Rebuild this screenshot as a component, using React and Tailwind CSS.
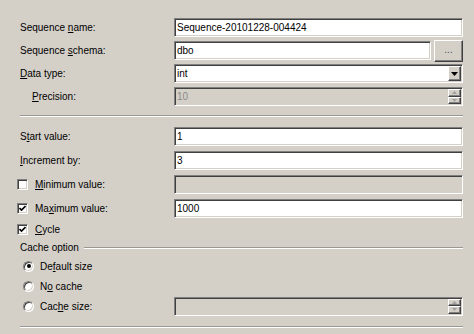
import React from "react";

const Acc = ({ text, i }) => (
  <span>
    {text.slice(0, i)}
    <span className="underline underline-offset-[1px]">{text[i]}</span>
    {text.slice(i + 1)}
  </span>
);

const Field = ({ children, disabled, className = "" }) => (
  <div
    className={`h-[19px] flex items-center border border-t-[#808080] border-l-[#808080] border-b-white border-r-white shadow-[inset_1px_1px_0_#404040,inset_-1px_-1px_0_#d4d0c8] ${
      disabled ? "bg-[#d4d0c8]" : "bg-white"
    } ${className}`}
  >
    {children}
  </div>
);

const Text = ({ children, gray }) => (
  <div className={`flex-1 pl-[2px] pt-[1px] leading-none ${gray ? "text-[#8a8a8a]" : "text-black"}`}>{children}</div>
);

const Spinner = () => (
  <div className="flex flex-col mr-[1px] w-[13px] h-[15px]">
    {[0, 1].map((k) => (
      <div
        key={k}
        className="flex-1 flex items-center justify-center bg-[#d4d0c8] border border-t-white border-l-white border-b-[#404040] border-r-[#404040] shadow-[inset_-1px_-1px_0_#808080]"
      >
        <svg width="5" height="3" viewBox="0 0 5 3">
          {k === 0 ? (
            <polygon points="0,3 5,3 2.5,0" fill="#a0a0a0" />
          ) : (
            <polygon points="0,0 5,0 2.5,3" fill="#a0a0a0" />
          )}
        </svg>
      </div>
    ))}
  </div>
);

const DropBtn = () => (
  <div className="mr-[1px] w-[13px] h-[15px] flex items-center justify-center bg-[#d4d0c8] border border-t-white border-l-white border-b-[#404040] border-r-[#404040] shadow-[inset_-1px_-1px_0_#808080]">
    <svg width="7" height="4" viewBox="0 0 7 4">
      <polygon points="0,0 7,0 3.5,4" fill="#000" />
    </svg>
  </div>
);

const Check = ({ checked }) => (
  <div className="w-[11px] h-[11px] bg-white border border-t-[#808080] border-l-[#808080] border-b-white border-r-white shadow-[inset_1px_1px_0_#404040,inset_-1px_-1px_0_#d4d0c8] flex items-center justify-center">
    {checked && (
      <svg width="7" height="7" viewBox="0 0 7 7">
        <path d="M0.5 3 L2.5 5 L6.5 1" stroke="#000" strokeWidth="1.6" fill="none" />
      </svg>
    )}
  </div>
);

const Radio = ({ on }) => (
  <div className="w-[11px] h-[11px] rounded-full bg-white border border-t-[#808080] border-l-[#808080] border-b-white border-r-white shadow-[inset_1px_1px_0_#404040,inset_-1px_-1px_0_#d4d0c8] flex items-center justify-center">
    {on && <div className="w-[4px] h-[4px] rounded-full bg-black" />}
  </div>
);

const Etched = ({ className = "" }) => (
  <div className={`h-0 border-t border-t-[#9a9893] border-b border-b-white ${className}`} />
);

const Row = ({ label, children, h = "h-[23px]" }) => (
  <div className={`flex items-center ${h}`}>
    <div className="w-[156px] shrink-0">{label}</div>
    <div className="flex-1">{children}</div>
  </div>
);

export default function App() {
  return (
    <div
      className="w-[474px] h-[334px] overflow-hidden bg-[#d4d0c8] text-[10px] text-black pt-[16px] pl-[18px] pr-[11px]"
      style={{ fontFamily: '"Liberation Sans", Arial, sans-serif' }}
    >
      <Row label={<div className="pl-[2px]"><Acc text="Sequence name:" i={9} /></div>}>
        <Field><Text>Sequence-20101228-004424</Text></Field>
      </Row>
      <Row label={<div className="pl-[2px]"><Acc text="Sequence schema:" i={9} /></div>}>
        <div className="flex items-center gap-[3px]">
          <Field className="flex-1"><Text>dbo</Text></Field>
          <div className="w-[29px] h-[22px] flex items-center justify-center bg-[#d4d0c8] border border-t-white border-l-white border-b-[#404040] border-r-[#404040] shadow-[inset_-1px_-1px_0_#808080] text-[#505050] leading-none pb-[2px]">
            ...
          </div>
        </div>
      </Row>
      <Row label={<div className="pl-[2px]"><Acc text="Data type:" i={0} /></div>}>
        <Field><Text>int</Text><DropBtn /></Field>
      </Row>
      <Row label={<div className="pl-[14px]"><Acc text="Precision:" i={0} /></div>}>
        <Field disabled><Text gray>10</Text><Spinner /></Field>
      </Row>

      <Etched className="mt-[7px] ml-[2px]" />

      <div className="mt-[7px]">
        <Row h="h-[24px]" label={<div className="pl-[2px]"><Acc text="Start value:" i={1} /></div>}>
          <Field><Text>1</Text></Field>
        </Row>
        <Row h="h-[24px]" label={<div className="pl-[2px]"><Acc text="Increment by:" i={0} /></div>}>
          <Field><Text>3</Text></Field>
        </Row>
        <Row
          h="h-[24px]"
          label={
            <div className="flex items-center gap-[7px] -ml-[1px]">
              <Check />
              <Acc text="Minimum value:" i={0} />
            </div>
          }
        >
          <Field disabled><Text> </Text></Field>
        </Row>
        <Row
          h="h-[24px]"
          label={
            <div className="flex items-center gap-[7px] -ml-[1px]">
              <Check checked />
              <Acc text="Maximum value:" i={2} />
            </div>
          }
        >
          <Field><Text>1000</Text></Field>
        </Row>
      </div>

      <div className="h-[18px] flex items-center gap-[7px] -ml-[1px]">
        <Check checked />
        <Acc text="Cycle" i={0} />
      </div>

      <div className="h-[18px] flex items-center pl-[2px]">
        <span>Cache option</span>
        <Etched className="flex-1 ml-[5px] mt-[1px]" />
      </div>

      <div className="pl-[5px]">
        <div className="h-[20px] flex items-center gap-[6px]">
          <Radio on />
          <Acc text="Default size" i={2} />
        </div>
        <div className="h-[20px] flex items-center gap-[6px]">
          <Radio />
          <Acc text="No cache" i={1} />
        </div>
        <div className="h-[20px] flex items-center">
          <div className="w-[151px] flex items-center gap-[6px]">
            <Radio />
            <Acc text="Cache size:" i={3} />
          </div>
          <Field disabled className="flex-1"><Text> </Text><Spinner /></Field>
        </div>
      </div>

      <Etched className="mt-[10px] ml-[2px]" />
    </div>
  );
}
